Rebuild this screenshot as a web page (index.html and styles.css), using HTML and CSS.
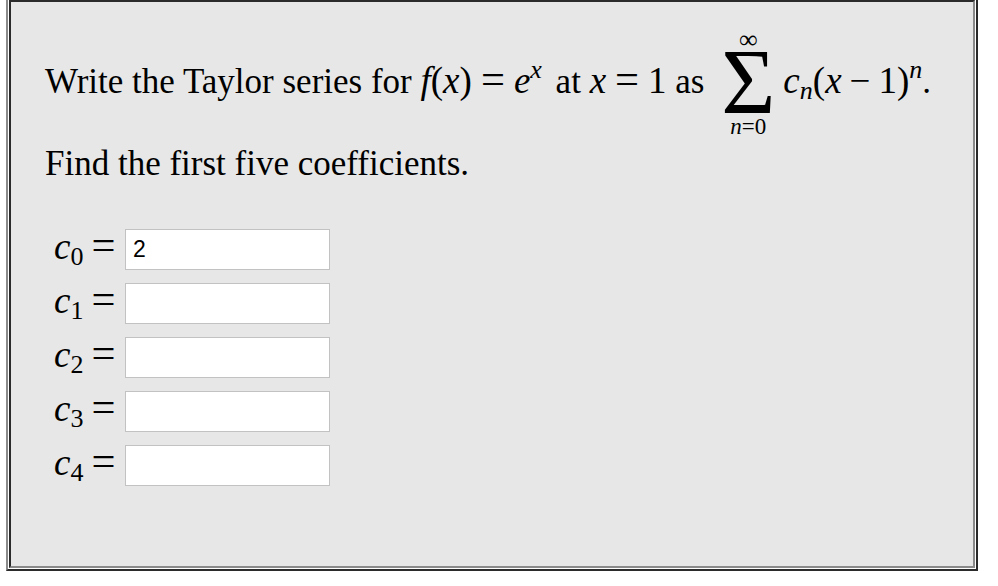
FILE: index.html
```html
<!DOCTYPE html>
<html>
<head>
<meta charset="utf-8">
<link rel="stylesheet" href="styles.css">
</head>
<body>
<div class="frame">
  <div class="panel">
    <p class="q">Write the Taylor series for <span class="m m1"><i>f</i>(<i>x</i>)<span class="rel">=</span><i>e</i><span class="sup"><i>x</i></span></span> at <span class="m"><i>x</i><span class="rel">=</span>1</span> as <span class="sum">Σ<span class="lim top">∞</span><span class="lim bot"><i>n</i>=0</span></span><span class="m"><i>c</i><span class="sub"><i>n</i></span>(<i>x</i><span class="bin">−</span>1)<span class="sup"><i>n</i></span></span>.</p>
    <p class="q q2">Find the first five coefficients.</p>
    <div class="rows">
      <div class="row"><span class="lab"><i>c</i><span class="sub">0</span><span class="rel">=</span></span><input class="box" type="text" value="2"></div>
      <div class="row"><span class="lab"><i>c</i><span class="sub">1</span><span class="rel">=</span></span><input class="box" type="text" value=""></div>
      <div class="row"><span class="lab"><i>c</i><span class="sub">2</span><span class="rel">=</span></span><input class="box" type="text" value=""></div>
      <div class="row"><span class="lab"><i>c</i><span class="sub">3</span><span class="rel">=</span></span><input class="box" type="text" value=""></div>
      <div class="row"><span class="lab"><i>c</i><span class="sub">4</span><span class="rel">=</span></span><input class="box" type="text" value=""></div>
    </div>
  </div>
</div>
</body>
</html>
```

FILE: styles.css
```css
html, body {
  margin: 0;
  padding: 0;
  background: #ffffff;
}
body {
  font-family: "Liberation Serif", "Times New Roman", serif;
  color: #000;
}
.frame {
  margin-left: 6px;
  width: 966px;
  border-left: 2px solid #8a8a8a;
  border-right: 2px solid #2b2b2b;
  border-bottom: 2px solid #2b2b2b;
  padding: 0 1px 1px 1px;
  background: #fff;
}
.panel {
  background: #e7e7e7;
  border-top: 2px solid #2b2b2b;
  border-left: 2px solid #2b2b2b;
  border-right: 2px solid #8a8a8a;
  border-bottom: 2px solid #8a8a8a;
  padding: 59px 0 0 34px;
  box-sizing: border-box;
  height: 568px;
}
.q {
  margin: 0;
  font-size: 35px;
  line-height: 40px;
  white-space: nowrap;
}
.q2 {
  margin-top: 42px;
}
.m {
  font-size: 37px;
}
.m1 {
  margin-right: 5px;
}
i {
  font-family: "Liberation Serif", "Times New Roman", serif;
  font-style: italic;
}
.rel {
  font-size: 1.15em;
  line-height: 0;
  margin: 0 9px;
}
.bin {
  margin: 0 8px;
}
.sup {
  font-size: 26px;
  position: relative;
  top: -15px;
  line-height: 0;
}
.sub {
  font-size: 26px;
  position: relative;
  top: 6px;
  line-height: 0;
}
.sum {
  position: relative;
  top: 20px;
  font-size: 93px;
  line-height: 0;
  margin: 0 8px 0 8px;
}
.lim {
  position: absolute;
  left: 50%;
  transform: translateX(-50%);
  line-height: 1;
  white-space: nowrap;
}
.top {
  font-size: 26px;
  top: -3px;
}
.bot {
  font-size: 23px;
  top: 85px;
}
.rows {
  margin-top: 45px;
  display: flex;
  flex-direction: column;
  gap: 13px;
  padding-left: 9px;
}
.row {
  display: flex;
  align-items: center;
  height: 41px;
}
.lab {
  width: 71px;
  font-size: 37px;
  line-height: 41px;
  padding-bottom: 6px;
  white-space: nowrap;
}
.lab .rel {
  margin: 0 0 0 8px;
}
.box {
  width: 205px;
  height: 41px;
  box-sizing: border-box;
  border: 1px solid #c2c2c2;
  background: #fff;
  padding: 0 7px;
  margin: 0;
  font: 23px "Liberation Sans", Arial, sans-serif;
  color: #000;
  outline: none;
}
```
